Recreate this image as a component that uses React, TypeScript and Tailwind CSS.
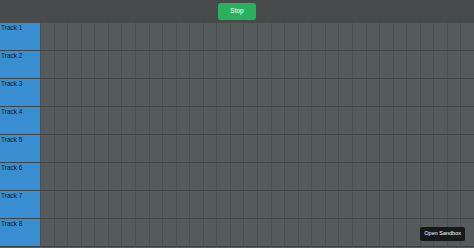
import React from 'react';

const tracks = ['Track 1', 'Track 2', 'Track 3', 'Track 4', 'Track 5', 'Track 6', 'Track 7', 'Track 8'];
const steps = Array.from({ length: 32 }, (_, i) => i);

export default function App() {
  return (
    <div className="relative w-[474px] h-[248px] overflow-hidden bg-[#555a5a] font-['Liberation_Sans',Arial,sans-serif]">
      {/* Transport */}
      <div className="h-[23px] flex items-center justify-center bg-[#474b4b]">
        <button className="w-[38px] h-[17px] rounded-[3px] bg-[#2bb15d] text-white text-[6.5px] leading-none">
          Stop
        </button>
      </div>

      {/* Sequencer grid */}
      <div className="flex flex-col">
        {tracks.map((name) => (
          <div key={name} className="flex h-[28px] border-b border-[#3f4343]">
            <div className="w-[40px] shrink-0 bg-[#3a8fd2] text-[#111] text-[6.5px] leading-[9px] pl-[1px]">
              {name}
            </div>
            <div className="flex flex-1">
              {steps.map((s) => (
                <div key={s} className="flex-1 border-l border-[#4a4e4e]" />
              ))}
            </div>
          </div>
        ))}
      </div>

      <button className="absolute right-[9px] bottom-[7px] h-[14px] px-[4px] rounded-[2px] bg-[#16191a] text-white text-[5.5px] leading-none">
        Open Sandbox
      </button>
    </div>
  );
}
